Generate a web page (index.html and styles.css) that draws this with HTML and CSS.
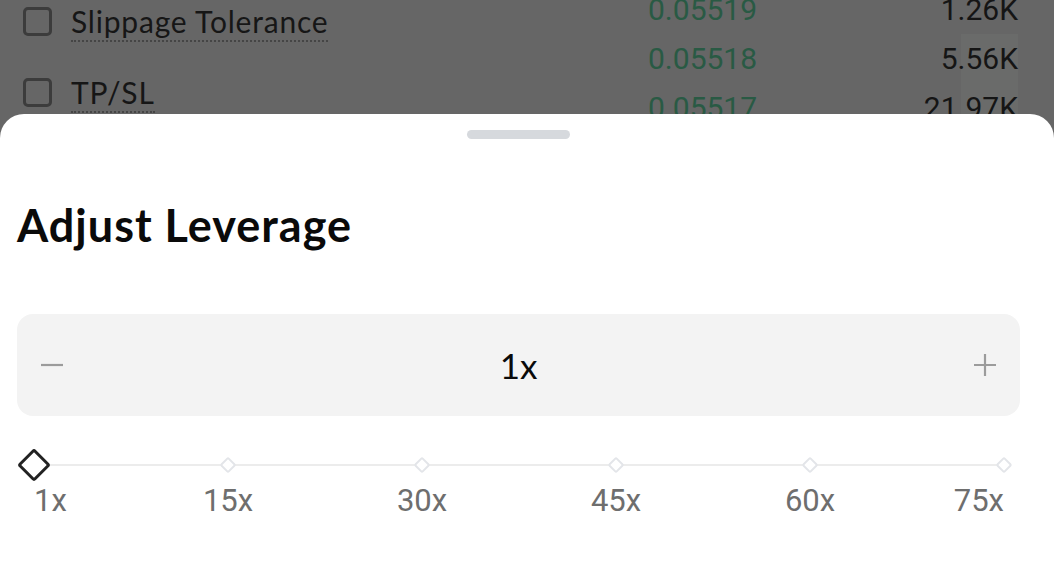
FILE: index.html
```html
<!DOCTYPE html>
<html>
<head>
<meta charset="utf-8">
<link rel="stylesheet" href="styles.css">
</head>
<body>
<div class="page">
  <div class="options">
    <div class="opt"><span class="check"></span><span class="opt-label">Slippage Tolerance</span></div>
    <div class="opt"><span class="check"></span><span class="opt-label">TP/SL</span></div>
  </div>
  <div class="book">
    <div class="book-row"><span class="price">0.05519</span><span class="qty">1.26K</span></div>
    <div class="book-row depth"><span class="price">0.05518</span><span class="qty">5.56K</span></div>
    <div class="book-row depth"><span class="price">0.05517</span><span class="qty">21.97K</span></div>
  </div>
</div>

<div class="sheet">
  <div class="handle"></div>
  <h1 class="title">Adjust Leverage</h1>
  <div class="stepper">
    <svg class="step-icon" width="22" height="22" viewBox="0 0 22 22"><path d="M0 11H22" stroke="#9b9b9b" stroke-width="2.2"/></svg>
    <span class="value">1x</span>
    <svg class="step-icon" width="22" height="22" viewBox="0 0 22 22"><path d="M0 11H22M11 0V22" stroke="#9b9b9b" stroke-width="2.2"/></svg>
  </div>
  <div class="slider">
    <div class="ticks">
      <div class="tick"><span class="thumb"></span></div>
      <div class="tick"><span class="dia"></span></div>
      <div class="tick"><span class="dia"></span></div>
      <div class="tick"><span class="dia"></span></div>
      <div class="tick"><span class="dia"></span></div>
      <div class="tick"><span class="dia"></span></div>
    </div>
    <div class="labels">
      <div class="lab first"><span>1x</span></div>
      <div class="lab"><span>15x</span></div>
      <div class="lab"><span>30x</span></div>
      <div class="lab"><span>45x</span></div>
      <div class="lab"><span>60x</span></div>
      <div class="lab last"><span>75x</span></div>
    </div>
  </div>
</div>
</body>
</html>
```

FILE: styles.css
```css
* { box-sizing: border-box; }
html, body {
  margin: 0;
  padding: 0;
  width: 1054px;
  height: 586px;
  overflow: hidden;
}
body {
  position: relative;
  background: #666666;
  font-family: "Lato", "Noto Sans", sans-serif;
}

.page {
  height: 586px;
  display: flex;
  justify-content: space-between;
  padding: 0 36px 0 23px;
}

.options {
  display: flex;
  flex-direction: column;
  gap: 29px;
}
.opt {
  height: 42px;
  display: flex;
  align-items: center;
  gap: 19px;
}
.check {
  width: 29px;
  height: 29px;
  border: 3px solid #3c3c3c;
  border-radius: 5px;
  flex: none;
}
.opt-label {
  font-size: 30px;
  letter-spacing: 0.8px;
  line-height: 32px;
  color: #161616;
  position: relative;
  top: 2px;
  padding-bottom: 3px;
  border-bottom: 2px dotted #454545;
}

.book {
  width: 370px;
  margin-top: -15px;
  display: flex;
  flex-direction: column;
  font-family: "Roboto", "Liberation Sans", sans-serif;
  font-size: 30px;
}
.book-row {
  height: 49px;
  display: flex;
  justify-content: space-between;
  align-items: center;
}
.book-row.depth {
  background: linear-gradient(to left, #6a6b6a 0, #6a6b6a 57px, transparent 57px);
}
.price { color: #295a44; }
.qty { color: #151515; }

.sheet {
  position: absolute;
  top: 114px;
  left: 0;
  right: 0;
  bottom: 0;
  background: #ffffff;
  border-radius: 24px 24px 0 0;
  padding: 16px 34px 0 17px;
  display: flex;
  flex-direction: column;
}
.handle {
  align-self: center;
  width: 103px;
  height: 9px;
  border-radius: 5px;
  background: #d6d9dd;
}
.title {
  margin: 64px 0 0;
  font-size: 45px;
  letter-spacing: 1px;
  line-height: 44px;
  font-weight: 700;
  color: #0a0a0a;
}
.stepper {
  margin-top: 67px;
  height: 102px;
  border-radius: 16px;
  background: #f3f3f3;
  display: flex;
  align-items: center;
  justify-content: space-between;
  padding: 0 24px;
}
.step-icon { flex: none; display: block; }
.value {
  font-size: 35px;
  color: #0a0a0a;
}

.slider {
  margin-top: 32px;
  padding-left: 17px;
  padding-right: 16px;
}
.ticks {
  height: 34px;
  display: flex;
  justify-content: space-between;
  background: linear-gradient(#ececec, #ececec) center / 100% 2px no-repeat;
}
.tick {
  width: 0;
  display: flex;
  align-items: center;
  justify-content: center;
}
.dia {
  flex: none;
  width: 12px;
  height: 12px;
  transform: rotate(45deg);
  border: 2px solid #e3e5e9;
  border-radius: 2px;
  background: #ffffff;
}
.thumb {
  flex: none;
  width: 24px;
  height: 24px;
  transform: rotate(45deg);
  border: 3px solid #222222;
  border-radius: 3px;
  background: #ffffff;
}
.labels {
  margin-top: 1px;
  display: flex;
  justify-content: space-between;
  font-family: "Roboto", "Liberation Sans", sans-serif;
  font-size: 31px;
  line-height: 36px;
  color: #6e6e6e;
}
.lab {
  width: 0;
  display: flex;
  justify-content: center;
  white-space: nowrap;
}
.lab.first { justify-content: flex-start; }
.lab.last { justify-content: flex-end; }
```
